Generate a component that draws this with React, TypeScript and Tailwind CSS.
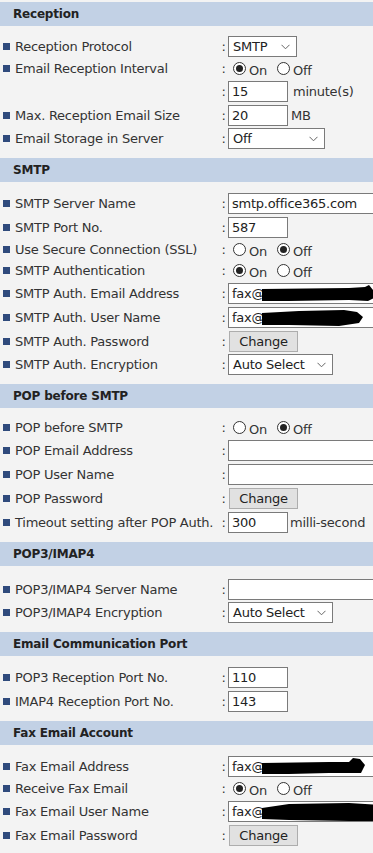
import React from 'react';

type Kind = 'input' | 'select' | 'radio' | 'button';

const ROW_H: Record<Kind, string> = {
  input: 'h-[24px]',
  select: 'h-[23px]',
  radio: 'h-[21px]',
  button: 'h-[24px]',
};

function Row({ label, kind, children }: { label?: string; kind: Kind; children: React.ReactNode }) {
  return (
    <div className={`flex items-center ${ROW_H[kind]}`}>
      <div className="flex items-center w-[219px] shrink-0 pl-[3px]">
        {label && <span className="w-[7px] h-[7px] bg-[#2f4a7c] shrink-0" />}
        {label && <span className="ml-[5px] whitespace-nowrap text-[#333]">{label}</span>}
      </div>
      <span className="w-[9px] text-center text-[#333] shrink-0">:</span>
      <div className="flex items-center">{children}</div>
    </div>
  );
}

function Header({ title, first }: { title: string; first?: boolean }) {
  return (
    <div
      className={`h-[24px] bg-[#c2d1e5] pl-[13px] flex items-center font-bold text-[12px] tracking-[-0.2px] text-[#222] ${
        first ? 'mt-[2px]' : ''
      }`}
    >
      {title}
    </div>
  );
}

function TextBox({ value, wide, blob }: { value?: string; wide?: boolean; blob?: React.ReactNode }) {
  return (
    <div
      className={`relative h-[21px] border border-[#7a7a7a] bg-white flex items-center pl-[3px] shrink-0 overflow-hidden ${
        wide ? 'w-[160px]' : 'w-[60px]'
      }`}
    >
      <span className="text-[#222] whitespace-nowrap">{value}</span>
      {blob}
    </div>
  );
}

function Chevron() {
  return (
    <svg width="9" height="6" viewBox="0 0 9 6" className="shrink-0">
      <path d="M0.5 0.8 L4.5 4.8 L8.5 0.8" fill="none" stroke="#666" strokeWidth="1" />
    </svg>
  );
}

function Select({ value, w }: { value: string; w: string }) {
  return (
    <div className={`h-[21px] border border-[#7a7a7a] bg-white flex items-center justify-between pl-[4px] pr-[6px] ${w}`}>
      <span className="text-[#222] whitespace-nowrap">{value}</span>
      <Chevron />
    </div>
  );
}

function Radio({ checked }: { checked?: boolean }) {
  return (
    <span className="w-[13px] h-[13px] rounded-full border border-[#333] bg-white flex items-center justify-center shrink-0">
      {checked && <span className="w-[7px] h-[7px] rounded-full bg-[#222]" />}
    </span>
  );
}

function OnOff({ on }: { on: boolean }) {
  return (
    <div className="flex items-center pl-[5px] text-[#333]">
      <Radio checked={on} />
      <span className="ml-[3px] mt-[3px]">On</span>
      <span className="ml-[10px]">
        <Radio checked={!on} />
      </span>
      <span className="ml-[3px] mt-[3px]">Off</span>
    </div>
  );
}

function ChangeButton() {
  return (
    <div className="h-[21px] w-[69px] ml-[1px] bg-[#e1e1e1] border border-[#adadad] flex items-center justify-center text-[#222]">
      Change
    </div>
  );
}

function Blob({ d }: { d: string }) {
  return (
    <svg className="absolute left-0 top-0" width="160" height="21" viewBox="0 0 160 21">
      <path d={d} fill="#000" />
    </svg>
  );
}

const BLOB_A = 'M33 5 L120 4 L136 3 L140 1 L144 6 L145 14 L139 17 L120 16 L60 17 L33 17 Z';
const BLOB_B = 'M33 5 L70 3 L115 2 L128 4 L134 9 L130 15 L110 18 L60 17 L33 17 Z';
const BLOB_C = 'M33 6 L100 5 L120 5 L124 1 L131 2 L136 8 L132 16 L100 16 L60 17 L33 17 Z';
const BLOB_D = 'M33 6 L60 2 L120 1 L150 3 L160 3 L160 20 L120 19 L60 18 L33 17 Z';

export default function App() {
  return (
    <div className="w-[373px] min-h-[853px] overflow-hidden bg-[#f3f3f3] text-[13px] tracking-[-0.25px] font-['DejaVu_Sans',Verdana,sans-serif] leading-none">
      <Header title="Reception" first />
      <div className="pt-[9px] pb-[8px]">
        <Row label="Reception Protocol" kind="select">
          <Select value="SMTP" w="w-[69px]" />
        </Row>
        <Row label="Email Reception Interval" kind="radio">
          <OnOff on />
        </Row>
        <Row kind="input">
          <TextBox value="15" />
          <span className="ml-[5px] text-[#333]">minute(s)</span>
        </Row>
        <Row label="Max. Reception Email Size" kind="input">
          <TextBox value="20" />
          <span className="ml-[3px] text-[#333]">MB</span>
        </Row>
        <Row label="Email Storage in Server" kind="select">
          <Select value="Off" w="w-[97px]" />
        </Row>
      </div>

      <Header title="SMTP" />
      <div className="pt-[9px] pb-[8px]">
        <Row label="SMTP Server Name" kind="input">
          <TextBox value="smtp.office365.com" wide />
        </Row>
        <Row label="SMTP Port No." kind="input">
          <TextBox value="587" />
        </Row>
        <Row label="Use Secure Connection (SSL)" kind="radio">
          <OnOff on={false} />
        </Row>
        <Row label="SMTP Authentication" kind="radio">
          <OnOff on />
        </Row>
        <Row label="SMTP Auth. Email Address" kind="input">
          <TextBox value="fax@" wide blob={<Blob d={BLOB_A} />} />
        </Row>
        <Row label="SMTP Auth. User Name" kind="input">
          <TextBox value="fax@" wide blob={<Blob d={BLOB_B} />} />
        </Row>
        <Row label="SMTP Auth. Password" kind="button">
          <ChangeButton />
        </Row>
        <Row label="SMTP Auth. Encryption" kind="select">
          <Select value="Auto Select" w="w-[105px]" />
        </Row>
      </div>

      <Header title="POP before SMTP" />
      <div className="pt-[9px] pb-[8px]">
        <Row label="POP before SMTP" kind="radio">
          <OnOff on={false} />
        </Row>
        <Row label="POP Email Address" kind="input">
          <TextBox wide />
        </Row>
        <Row label="POP User Name" kind="input">
          <TextBox wide />
        </Row>
        <Row label="POP Password" kind="button">
          <ChangeButton />
        </Row>
        <Row label="Timeout setting after POP Auth." kind="input">
          <TextBox value="300" />
          <span className="ml-[2px] text-[#333]">milli-second</span>
        </Row>
      </div>

      <Header title="POP3/IMAP4" />
      <div className="pt-[11px] pb-[8px]">
        <Row label="POP3/IMAP4 Server Name" kind="input">
          <TextBox wide />
        </Row>
        <Row label="POP3/IMAP4 Encryption" kind="select">
          <Select value="Auto Select" w="w-[105px]" />
        </Row>
      </div>

      <Header title="Email Communication Port" />
      <div className="pt-[9px] pb-[8px]">
        <Row label="POP3 Reception Port No." kind="input">
          <TextBox value="110" />
        </Row>
        <Row label="IMAP4 Reception Port No." kind="input">
          <TextBox value="143" />
        </Row>
      </div>

      <Header title="Fax Email Account" />
      <div className="pt-[9px] pb-[8px]">
        <Row label="Fax Email Address" kind="input">
          <TextBox value="fax@" wide blob={<Blob d={BLOB_C} />} />
        </Row>
        <Row label="Receive Fax Email" kind="radio">
          <OnOff on />
        </Row>
        <Row label="Fax Email User Name" kind="input">
          <TextBox value="fax@" wide blob={<Blob d={BLOB_D} />} />
        </Row>
        <Row label="Fax Email Password" kind="button">
          <ChangeButton />
        </Row>
      </div>
    </div>
  );
}
